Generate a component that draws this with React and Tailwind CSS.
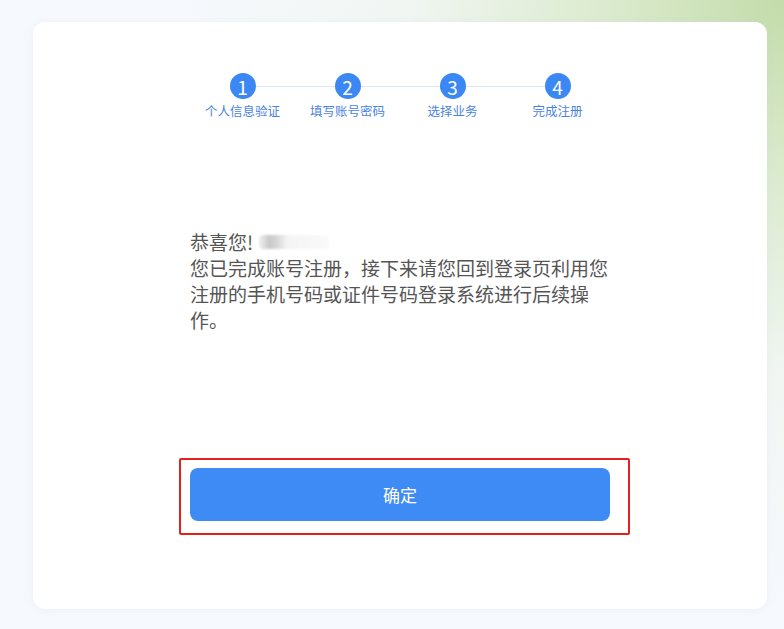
import React from 'react';

const steps = ['个人信息验证', '填写账号密码', '选择业务', '完成注册'];

const Stepper = () => (
  <div className="relative flex w-[420px]">
    {/* connecting line */}
    <div className="absolute top-[13px] left-[52px] h-px w-[315px] bg-[#dde6f3]" />
    {steps.map((label, i) => (
      <div key={label} className="relative flex w-[105px] flex-col items-center">
        <div className="flex h-[26px] w-[26px] items-center justify-center rounded-full bg-[#3b88f5] text-[19px] leading-none text-white">
          {i + 1}
        </div>
        <span className="mt-[4px] text-[12.5px] leading-[16px] text-[#4b84e0]">{label}</span>
      </div>
    ))}
  </div>
);

export default function App() {
  return (
    <div className="min-h-[629px] w-full bg-[radial-gradient(circle_at_100%_0%,#c3dcaa_0%,#dcebcf_18%,#f1f6f3_38%,#f6f9fd_60%)] pl-[33px] pr-[17px] pt-[22px] pb-[20px] font-['Noto_Sans_CJK_SC','Microsoft_YaHei',sans-serif]">
      <div className="flex h-[587px] flex-col items-center rounded-[12px] bg-white pt-[51px] shadow-[0_0_8px_rgba(180,200,230,0.15)]">
        <Stepper />

        <div className="mt-[110px] w-[420px] text-[19px] leading-[26px] text-[#555]">
          <p className="flex items-center">
            恭喜您!
            <span className="ml-[6px] inline-block h-[14px] w-[70px] rounded-sm bg-[linear-gradient(90deg,#f0f0f0_0%,#c9c9c9_15%,#d6d6d6_25%,#f4f4f4_40%,#fafafa_100%)] blur-[1px]" />
          </p>
          <p>您已完成账号注册，接下来请您回到登录页利用您注册的手机号码或证件号码登录系统进行后续操作。</p>
        </div>

        <div className="mt-[125px] w-[420px]">
          <div className="-ml-[11px] w-fit rounded-[2px] border-2 border-[#e4201c] pt-[8px] pr-[18px] pb-[12px] pl-[9px]">
            <button className="flex h-[53px] w-[420px] items-center justify-center rounded-[8px] bg-[#3f8bf5] text-[17px] text-white">
              确定
            </button>
          </div>
        </div>
      </div>
    </div>
  );
}
